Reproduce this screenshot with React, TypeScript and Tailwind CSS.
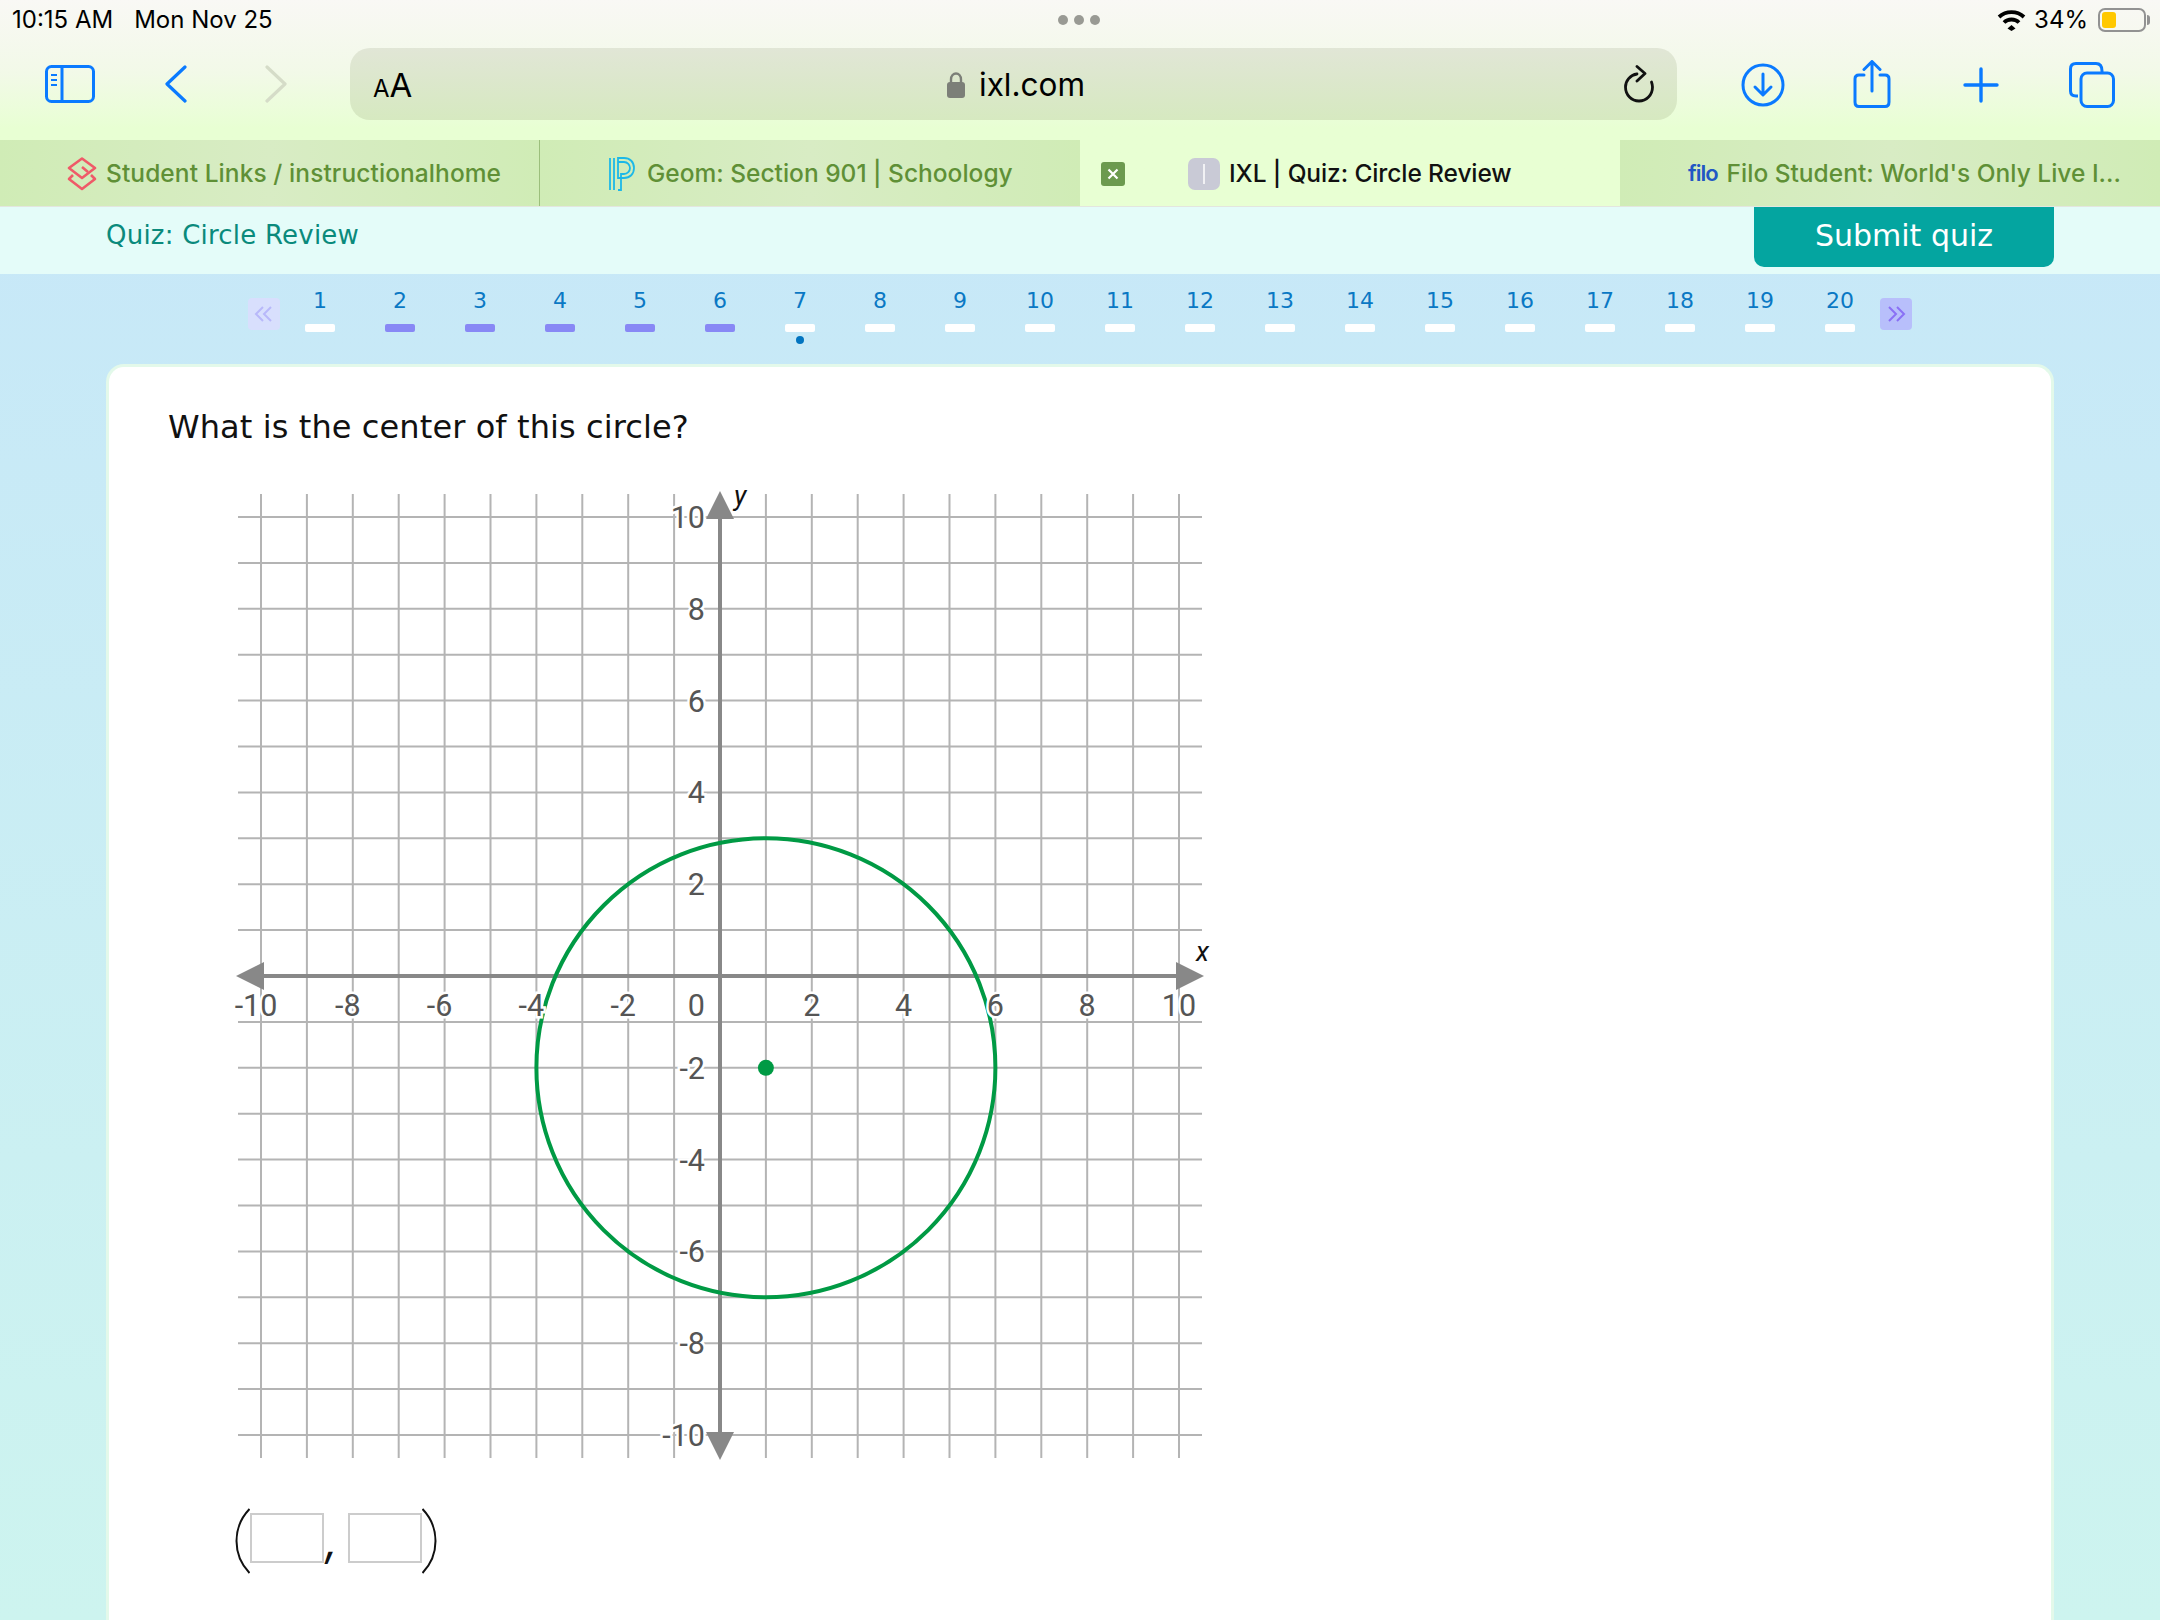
import React from 'react';

const UNIT = 45.9;
const X0 = 720;
const Y0 = 976;
const TICKS = Array.from({ length: 21 }, (_, i) => i - 10);
const LABELS = [-10, -8, -6, -4, -2, 2, 4, 6, 8, 10];
const QUESTIONS = Array.from({ length: 20 }, (_, i) => i + 1);
const ANSWERED = [2, 3, 4, 5, 6];

const labelStyle = { stroke: 'white', strokeWidth: 5, paintOrder: 'stroke' } as React.CSSProperties;

function Graph() {
  return (
    <svg viewBox="230 477 985 993" width={985} height={993} className="block ml-[121px]">
      {TICKS.map((t) => (
        <g key={t}>
          <line x1={X0 + t * UNIT} x2={X0 + t * UNIT} y1={494} y2={1458} stroke="#b4b4b4" strokeWidth={2} />
          <line y1={Y0 - t * UNIT} y2={Y0 - t * UNIT} x1={238} x2={1202} stroke="#b4b4b4" strokeWidth={2} />
        </g>
      ))}
      <line x1={250} x2={1190} y1={Y0} y2={Y0} stroke="#888888" strokeWidth={4} />
      <line x1={X0} x2={X0} y1={505} y2={1446} stroke="#888888" strokeWidth={4} />
      <polygon points="720,491 706,519 734,519" fill="#888888" />
      <polygon points="720,1460 706,1432 734,1432" fill="#888888" />
      <polygon points="236,976 264,962 264,990" fill="#888888" />
      <polygon points="1204,976 1176,962 1176,990" fill="#888888" />
      <circle cx={X0 + UNIT} cy={Y0 + 2 * UNIT} r={UNIT * 5} fill="none" stroke="#009a44" strokeWidth={4} />
      <circle cx={X0 + UNIT} cy={Y0 + 2 * UNIT} r={8} fill="#009a44" />
      <g fontFamily="Roboto, sans-serif" fontSize={30.5} fill="#555555">
        {LABELS.map((n) => (
          <text key={'x' + n} x={X0 + n * UNIT - (n < 0 ? 5 : 0)} y={1016} textAnchor="middle" style={labelStyle}>
            {n}
          </text>
        ))}
        {LABELS.map((n) => (
          <text key={'y' + n} x={705} y={Y0 - n * UNIT + 11} textAnchor="end" style={labelStyle}>
            {n}
          </text>
        ))}
        <text x={705} y={1016} textAnchor="end" style={labelStyle}>0</text>
      </g>
      <g fontFamily="Roboto, sans-serif" fontSize={27} fontStyle="italic" fill="#111111">
        <text x={1196} y={961}>x</text>
        <text x={734} y={505}>y</text>
      </g>
    </svg>
  );
}

function Paren({ flip }: { flip?: boolean }) {
  return (
    <svg width={15} height={66} viewBox="0 0 15 66" className={flip ? 'block -scale-x-100' : 'block'}>
      <path d="M14.5 1 C4 12 1.5 22 1.5 33 C1.5 44 4 54 14.5 65" fill="none" stroke="#111111" strokeWidth={2} />
    </svg>
  );
}

function StatusBar() {
  return (
    <div className="grid grid-cols-3 items-center h-[40px] pl-[12px] pr-[14px] text-[24px] text-black">
      <div className="flex gap-[21px]">
        <span>10:15 AM</span>
        <span>Mon Nov 25</span>
      </div>
      <div className="flex justify-center gap-[6px]">
        <span className="w-[10px] h-[10px] rounded-full bg-[#999a94]" />
        <span className="w-[10px] h-[10px] rounded-full bg-[#999a94]" />
        <span className="w-[10px] h-[10px] rounded-full bg-[#999a94]" />
      </div>
      <div className="flex items-center justify-end">
        <svg width={29} height={22} viewBox="0 0 29 22" className="mr-[8px]">
          <path d="M14.5 16 L18.5 19.5 L14.5 22 L10.5 19.5 Z" fill="black" />
          <path d="M2 8 C9 1.5 20 1.5 27 8" fill="none" stroke="black" strokeWidth={3.8} />
          <path d="M7 13.5 C11 9.5 18 9.5 22 13.5" fill="none" stroke="black" strokeWidth={3.8} />
        </svg>
        <span>34%</span>
        <div className="relative ml-[10px] w-[48px] h-[24px] rounded-[7px] border-2 border-[#929292] p-[2px]">
          <div className="w-[14px] h-full rounded-[3px] bg-[#ffc800]" />
          <div className="absolute right-[-6px] top-[5px] w-[3px] h-[10px] rounded-r-full bg-[#929292]" />
        </div>
      </div>
    </div>
  );
}

function Toolbar() {
  return (
    <div className="flex items-start h-[100px] pt-[8px] pl-[45px]">
      <svg width={50} height={38} viewBox="0 0 50 38" fill="none" stroke="#0a7aff" className="mt-[17px]">
        <rect x="1.5" y="1.5" width="47" height="35" rx="5" strokeWidth={3} />
        <path d="M17 2 V36" strokeWidth={3} />
        <path d="M6 10 H12 M6 15 H12 M6 20 H12" strokeWidth={2.2} />
      </svg>
      <svg width={22} height={38} viewBox="0 0 22 38" fill="none" stroke="#0a7aff" strokeWidth={3.2} strokeLinecap="round" strokeLinejoin="round" className="ml-[70px] mt-[17px]">
        <path d="M20 2 L2 19 L20 36" />
      </svg>
      <svg width={22} height={38} viewBox="0 0 22 38" fill="none" stroke="#d5dcc8" strokeWidth={3.2} strokeLinecap="round" strokeLinejoin="round" className="ml-[78px] mt-[17px]">
        <path d="M2 2 L20 19 L2 36" />
      </svg>
      <div className="relative flex items-center ml-[63px] w-[1327px] h-[72px] rounded-[20px] bg-gradient-to-b from-[#e1e6d6] to-[#d6e9c0] pl-[23px] pr-[22px]">
        <span className="flex items-baseline text-black leading-none mt-[2px]">
          <span className="text-[24px]">A</span>
          <span className="text-[33px]">A</span>
        </span>
        <div className="absolute left-[597px] top-[21px] flex items-center">
          <svg width={18} height={26} viewBox="0 0 18 26" className="mr-[14px]">
            <path d="M4 12 V7.5 C4 -0.5 14 -0.5 14 7.5 V12" fill="none" stroke="#7c7f78" strokeWidth={2.4} />
            <rect x="0" y="10" width="18" height="16" rx="3" fill="#7c7f78" />
          </svg>
          <span className="text-[31.5px] leading-none text-black">ixl.com</span>
        </div>
        <svg width={30} height={38} viewBox="0 0 30 38" fill="none" stroke="#111111" strokeWidth={2.8} strokeLinecap="round" strokeLinejoin="round" className="ml-auto -translate-x-[1px]">
          <path d="M13 9 C6 10 1.5 16 1.5 22 C1.5 30 7.5 36 15 36 C22.5 36 28.5 30 28.5 22 C28.5 20 28 18.5 27.5 17" />
          <path d="M13 1.5 L21 8.5 L13 16" />
        </svg>
      </div>
      <svg width={44} height={44} viewBox="0 0 44 44" fill="none" stroke="#0a7aff" strokeWidth={3} strokeLinecap="round" strokeLinejoin="round" className="ml-[64px] mt-[15px]">
        <circle cx="22" cy="22" r="20" />
        <path d="M22 11 V31 M14 24 L22 32 L30 24" />
      </svg>
      <svg width={38} height={48} viewBox="0 0 38 48" fill="none" stroke="#0a7aff" strokeWidth={3} strokeLinecap="round" strokeLinejoin="round" className="ml-[68px] mt-[12px]">
        <path d="M11 15 H6 C3 15 2 16.5 2 19 V42 C2 45 3.5 46.5 6 46.5 H32 C35 46.5 36 45 36 42 V19 C36 16.5 35 15 32 15 H27" />
        <path d="M19 31 V2 M11 9.5 L19 1.5 L27 9.5" />
      </svg>
      <svg width={36} height={36} viewBox="0 0 36 36" fill="none" stroke="#0a7aff" strokeWidth={3.4} strokeLinecap="round" className="ml-[72px] mt-[19px]">
        <path d="M18 2 V34 M2 18 H34" />
      </svg>
      <svg width={46} height={46} viewBox="0 0 46 46" fill="none" stroke="#0a7aff" strokeWidth={3} className="ml-[70px] mt-[14px]">
        <path d="M9 34 H7 C3.5 34 1.5 32 1.5 29 V7 C1.5 3.5 3.5 1.5 7 1.5 H27 C30.5 1.5 33 3.5 33 9 V11" />
        <rect x="12" y="11" width="32.5" height="33.5" rx="6" />
      </svg>
    </div>
  );
}

function Tab({ children, active, last }: { children: React.ReactNode; active?: boolean; last?: boolean }) {
  return (
    <div className={`flex items-center h-full pt-[1px] text-[24.5px] font-medium whitespace-nowrap ${active ? 'text-[#111111]' : 'text-[#5f9036] bg-gradient-to-r from-[#d0ecb6] via-[#d8ecc4] to-[#d0ecb6]'} ${last ? 'border-r border-[#9cbf7c]' : ''}`}>
      {children}
    </div>
  );
}

function TabBar() {
  return (
    <div className="grid grid-cols-4 h-[67px] border-b border-[#e3e6df] font-['Inter',sans-serif]">
      <Tab last>
        <svg width={30} height={34} viewBox="0 0 30 34" fill="none" stroke="#ef5a68" strokeWidth={2.6} strokeLinejoin="round" className="ml-[67px] mr-[9px]">
          <path d="M15 1.5 L28 11 L15 21 L2 11 Z" />
          <path d="M6 18 L2 22 L15 32 L28 22 L24 18" />
          <path d="M15 10 L21 15" />
        </svg>
        <span className="tracking-[0.08px]">Student Links / instructionalhome</span>
      </Tab>
      <Tab>
        <svg width={26} height={34} viewBox="0 0 26 34" fill="none" stroke="#1db8e8" strokeWidth={1.8} className="ml-[69px] mr-[12px]">
          <path d="M1 1 V33 M5 1 V33" />
          <path d="M9 1 H15 C21 1 25 5 25 11 C25 17 21 21 15 21 H9 Z" />
          <path d="M9 5 H15 C18.5 5 21 8 21 11 C21 14 18.5 17 15 17 H12 V33 H9" />
        </svg>
        Geom: Section 901 | Schoology
      </Tab>
      <Tab active>
        <div className="flex items-center justify-center ml-[21px] w-[24px] h-[24px] rounded-[3px] bg-[#6c9a4f]">
          <svg width={12} height={12} viewBox="0 0 12 12" stroke="white" strokeWidth={2.2}>
            <path d="M1.5 1.5 L10.5 10.5 M10.5 1.5 L1.5 10.5" />
          </svg>
        </div>
        <div className="flex items-center justify-center ml-[63px] mr-[9px] w-[32px] h-[32px] rounded-[7px] bg-[#c9cad6]">
          <span className="w-[2px] h-[20px] bg-[#f1f1f4]" />
        </div>
        <span className="tracking-[-0.1px]">IXL | Quiz: Circle Review</span>
      </Tab>
      <Tab>
        <span className="ml-[68px] mr-[9px] text-[#2257c4] text-[22px] font-semibold tracking-[-1px]">filo</span>
        Filo Student: World's Only Live I...
      </Tab>
    </div>
  );
}

function QuizHeader() {
  return (
    <div className="flex justify-between h-[67px] bg-[#e4fcf9] pl-[106px] pr-[106px] font-['DejaVu_Sans',sans-serif]">
      <span className="mt-[9px] text-[26px] tracking-[0.22px] text-[#0a8a7c]">Quiz: Circle Review</span>
      <button className="w-[300px] h-[60px] pb-[4px] rounded-b-[10px] bg-[#04a5a0] text-[30px] text-white">Submit quiz</button>
    </div>
  );
}

function QuestionNav() {
  return (
    <div className="flex justify-center pt-[24px] h-[90px] font-['DejaVu_Sans',sans-serif]">
      <div className="flex items-center justify-center w-[32px] h-[32px] rounded-[4px] bg-[#d8dffd]">
        <svg width={20} height={16} viewBox="0 0 20 16" fill="none" stroke="#b8b8fa" strokeWidth={2}>
          <path d="M9 1 L2 8 L9 15 M17 1 L10 8 L17 15" />
        </svg>
      </div>
      {QUESTIONS.map((q) => (
        <div key={q} className="flex flex-col items-center w-[80px] -mt-[7px]">
          <span className="h-[33px] text-[22px] leading-[20px] text-[#0a78c4]">{q}</span>
          <span className={`w-[30px] h-[8px] rounded-[2px] ${ANSWERED.includes(q) ? 'bg-[#8888f5]' : 'bg-white'}`} />
          {q === 7 && <span className="mt-[4px] w-[8px] h-[8px] rounded-full bg-[#0274c0]" />}
        </div>
      ))}
      <div className="flex items-center justify-center w-[32px] h-[32px] rounded-[4px] bg-[#b8bffb]">
        <svg width={20} height={16} viewBox="0 0 20 16" fill="none" stroke="#8a70f5" strokeWidth={2}>
          <path d="M3 1 L10 8 L3 15 M11 1 L18 8 L11 15" />
        </svg>
      </div>
    </div>
  );
}

export default function App() {
  return (
    <div className="w-[2160px] h-[1620px] overflow-hidden flex flex-col bg-gradient-to-b from-[#c6e6f9] to-[#cdf4ef] font-['Inter',sans-serif]">
      <div className="bg-gradient-to-b from-[#f9f8f5] via-[#f2f9e8] via-[35%] to-[#e8ffd3] to-[62%]">
        <StatusBar />
        <Toolbar />
        <TabBar />
      </div>
      <QuizHeader />
      <QuestionNav />
      <div className="flex-1 mx-[106px] rounded-t-[18px] border-[3px] border-b-0 border-[#e3f9ea] bg-white">
        <p className="pl-[59px] pt-[38px] h-[110px] text-[32px] tracking-[0.1px] leading-[44px] text-[#111111] font-['DejaVu_Sans',sans-serif]">
          What is the center of this circle?
        </p>
        <Graph />
        <div className="flex items-center ml-[126px] mt-[38px]">
          <Paren />
          <input className="w-[74px] h-[50px] -translate-y-[3px] border-2 border-[#cccccc] bg-white" />
          <span className="w-[24px] pl-[1px] self-end -translate-y-[19px] text-[44px] leading-[30px] italic text-[#111111] font-['Inter',sans-serif]">,</span>
          <input className="w-[74px] h-[50px] -translate-y-[3px] border-2 border-[#cccccc] bg-white" />
          <Paren flip />
        </div>
      </div>
    </div>
  );
}
